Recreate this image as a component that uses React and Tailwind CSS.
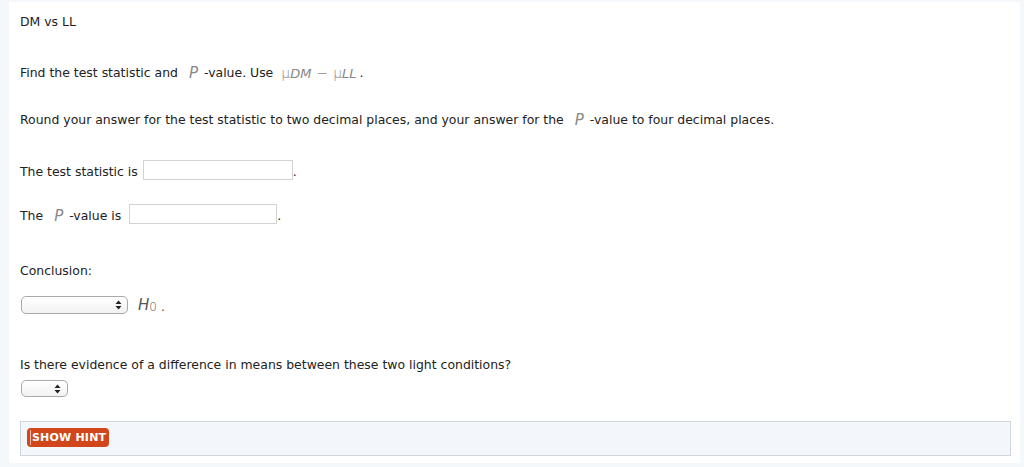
import React from "react";

function P() {
  return (
    <span className="ml-[11px] mr-[6px] inline-block text-[15px] italic text-[#888] font-extralight" style={{ fontFamily: '"DejaVu Sans", sans-serif' }}>
      P
    </span>
  );
}

function Arrows() {
  return (
    <svg width="7" height="10" viewBox="0 0 7 10" className="block">
      <path d="M3.5 0.5 L6.5 4 L0.5 4 Z" fill="#222" />
      <path d="M3.5 9.5 L6.5 6 L0.5 6 Z" fill="#222" />
    </svg>
  );
}

export default function App() {
  return (
    <div className="w-[1024px] h-[467px] bg-[#f5f8fb] pt-[2px] pl-[9px] pr-[4px]" style={{ fontFamily: '"DejaVu Sans", Verdana, sans-serif' }}>
      <div className="bg-white h-[461px] pl-[11px] pr-[9px] pt-[13px] text-[12.45px] text-[#222] leading-[14px]">
        <div>DM vs LL</div>
        <div className="mt-[34px] flex items-center h-[20px]">
          <span>Find the test statistic and</span>
          <P />
          <span>-value. Use</span>
          <span className="ml-[8px] text-[#888] text-[14px] italic font-extralight flex items-baseline">
            <span className="not-italic">µ</span>
            <span className="text-[13px]">DM</span>
            <span className="mx-[5px] not-italic">−</span>
            <span className="not-italic">µ</span>
            <span className="text-[13px]">LL</span>
          </span>
          <span className="ml-[3px]">.</span>
        </div>
        <div className="mt-[27px] flex items-center h-[20px]">
          <span>Round your answer for the test statistic to two decimal places, and your answer for the</span>
          <P />
          <span>-value to four decimal places.</span>
        </div>
        <div className="mt-[30px] flex items-end h-[20px]">
          <span className="mb-[1px]">The test statistic is</span>
          <input className="ml-[5px] w-[150px] h-[20px] border border-[#d3d3d3] bg-white outline-none" />
          <span className="mb-[1px]">.</span>
        </div>
        <div className="mt-[24px] flex items-end h-[20px]">
          <span className="mb-[1px] flex items-center">The<P />-value is</span>
          <input className="ml-[8px] w-[148px] h-[20px] border border-[#d3d3d3] bg-white outline-none" />
          <span className="mb-[1px]">.</span>
        </div>
        <div className="mt-[40px]">Conclusion:</div>
        <div className="mt-[17px] flex items-center h-[20px]">
          <div className="ml-[1px] w-[107px] h-[18px] rounded-[5px] border border-[#a9a9a9] bg-gradient-to-b from-white to-[#f2f2f2] flex items-center justify-end pr-[5px]">
            <Arrows />
          </div>
          <span className="ml-[10px] text-[15px] italic font-extralight text-[#555]">H</span>
          <span className="text-[12px] text-[#555] font-extralight mt-[4px]">0</span>
          <span className="ml-[4px] mt-[4px] text-[#555]">.</span>
        </div>
        <div className="mt-[43px]">Is there evidence of a difference in means between these two light conditions?</div>
        <div className="mt-[8px] ml-[1px] w-[47px] h-[17px] rounded-[5px] border border-[#a9a9a9] bg-gradient-to-b from-white to-[#f2f2f2] flex items-center justify-end pr-[6px]">
          <Arrows />
        </div>
        <div className="mt-[24px] h-[35px] border border-[#cfd6de] bg-[#f3f7fb] pl-[6px] pt-[6px]">
          <button className="relative h-[19px] w-[82px] rounded-[4px] bg-[#d1461b] text-white text-[11px] font-bold tracking-[0.2px] pl-[5px] text-left" style={{ fontFamily: '"DejaVu Sans", Verdana, sans-serif' }}>
            <span className="absolute left-[3px] top-[2px] h-[15px] w-[1px] bg-[#f3b9a5]"></span>
            SHOW HINT
          </button>
        </div>
      </div>
    </div>
  );
}
